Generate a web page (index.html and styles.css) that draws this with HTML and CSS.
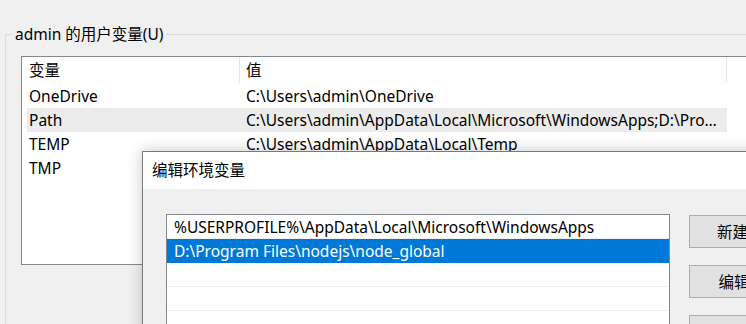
FILE: index.html
```html
<!DOCTYPE html>
<html lang="zh-CN">
<head>
  <meta charset="UTF-8" />
  <title>环境变量</title>
  <link rel="stylesheet" href="styles.css">
</head>
<body>

  <div class="group">
    <div class="group-title">admin 的用户变量(U)</div>
    <div class="listview">
      <div class="lv-head">
        <span class="hcol name">变量</span>
        <span class="hcol value">值</span>
      </div>
      <div class="lv-row">
        <span class="col name">OneDrive</span>
        <span class="col value">C:\Users\admin\OneDrive</span>
      </div>
      <div class="lv-row hot">
        <span class="col name">Path</span>
        <span class="col value">C:\Users\admin\AppData\Local\Microsoft\WindowsApps;D:\Program Files\nodejs\node_global</span>
      </div>
      <div class="lv-row">
        <span class="col name">TEMP</span>
        <span class="col value">C:\Users\admin\AppData\Local\Temp</span>
      </div>
      <div class="lv-row">
        <span class="col name">TMP</span>
        <span class="col value">C:\Users\admin\AppData\Local\Temp</span>
      </div>
    </div>
  </div>

  <div class="dialog">
    <div class="dialog-title">编辑环境变量</div>
    <div class="dialog-body">
      <div class="pathlist">
        <div class="path-item">%USERPROFILE%\AppData\Local\Microsoft\WindowsApps</div>
        <div class="path-item selected">D:\Program Files\nodejs\node_global</div>
        <div class="path-item"></div>
        <div class="path-item"></div>
        <div class="path-item"></div>
      </div>
      <div class="buttons">
        <button class="btn">新建(N)</button>
        <button class="btn">编辑(E)</button>
        <button class="btn">浏览(B)...</button>
      </div>
    </div>
  </div>

</body>
</html>
```

FILE: styles.css
```css
* {
  margin: 0;
  padding: 0;
  box-sizing: border-box;
}
body {
  font-family: "Noto Sans", "Noto Sans CJK SC", sans-serif;
  font-size: 15.5px;
  color: #000;
  background: #f0f0f0;
  width: 746px;
  height: 324px;
  overflow: hidden;
  position: relative;
}

/* user variables group */
.group {
  margin: 34px 0 0 5px;
  width: 800px;
  height: 320px;
  border: 1px solid #dcdcdc;
}
.group-title {
  width: max-content;
  margin: -11px 0 0 6px;
  padding: 0 3px;
  line-height: 20px;
  background: #f0f0f0;
}
.listview {
  margin: 12px 0 0 15px;
  width: 760px;
  height: 209px;
  background: #fff;
  border: 1px solid #828790;
}
.lv-head {
  display: flex;
  height: 27px;
}
.hcol {
  line-height: 27px;
  height: 26px;
  border-right: 1px solid #e5e5e5;
}
.hcol.name {
  width: 218px;
  padding-left: 7px;
}
.hcol.value {
  width: 487px;
  padding-left: 6px;
}
.lv-row {
  display: flex;
  margin-left: 5px;
  width: 700px;
  height: 24px;
  padding-top: 1px;
  line-height: 23px;
}
.lv-row.hot {
  background: #ececec;
}
.col {
  white-space: nowrap;
  overflow: hidden;
  text-overflow: ellipsis;
}
.col.name {
  width: 212px;
  padding-left: 2px;
}
.col.value {
  width: 488px;
  padding-left: 7px;
  padding-right: 4px;
}

/* edit dialog window */
.dialog {
  position: absolute;
  left: 142px;
  top: 151px;
  width: 700px;
  height: 220px;
  background: #f0f0f0;
  border: 1px solid #7a7a7a;
  box-shadow: 0 0 14px rgba(0, 0, 0, 0.22);
}
.dialog-title {
  height: 37px;
  line-height: 37px;
  padding-left: 9px;
  background: #fff;
}
.dialog-body {
  display: flex;
  gap: 19px;
  padding: 25px 0 0 23px;
}
.pathlist {
  width: 504px;
  height: 140px;
  background: #fff;
  border: 1px solid #828790;
}
.path-item {
  height: 24px;
  padding: 2px 0 0 7px;
  line-height: 21px;
  border-bottom: 1px solid #efefef;
  white-space: nowrap;
}
.path-item.selected {
  background: #0078d7;
  border-bottom-color: #0078d7;
  color: #fff;
}
.buttons {
  display: flex;
  flex-direction: column;
  gap: 17px;
  margin-top: 1px;
}
.btn {
  width: 108px;
  height: 33px;
  font: inherit;
  color: #000;
  background: #e1e1e1;
  border: 1px solid #adadad;
}
```
